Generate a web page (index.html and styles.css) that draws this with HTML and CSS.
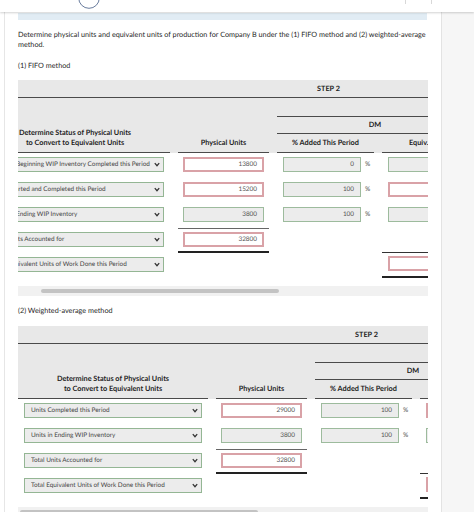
FILE: index.html
```html
<!DOCTYPE html>
<html lang="en">
<head>
<meta charset="utf-8">
<title>Physical and equivalent units</title>
<link rel="stylesheet" href="styles.css">
</head>
<body>
<header class="topbar">
  <div class="tb-circle"><svg width="22" height="22" viewBox="0 0 22 22"><circle cx="11" cy="11" r="10.3" fill="none" stroke="#6a7d9e" stroke-width="1"/></svg></div>
  <div class="tb-btn"></div>
</header>
<div class="page">
  <div class="gutter"></div>
  <main class="card">
    <div class="notice"></div>
    <p class="intro">Determine physical units and equivalent units of production for Company B under the (1) FIFO method and (2) weighted-average method.</p>
    <p class="label">(1) FIFO method</p>

    <div class="scroller">
      <div class="tbl tbl-scrolled">
        <div class="grid thead">
          <div class="step">STEP 2</div>
          <div class="h-tall hc1">Determine Status of Physical Units<br>to Convert to Equivalent Units</div>
          <div class="h-tall hc2">Physical Units</div>
          <div class="h-group hg1">DM</div>
          <div class="h-group hg2"></div>
          <div class="h-cell hc3">% Added This Period</div>
          <div class="h-cell hc4">Equiv.</div>
          <div class="h-cell hc5"></div>
          <div class="h-cell hc6"></div>
        </div>
        <div class="grid tbody">
          <div class="cell c1"><div class="sel"><span>Units in Beginning WIP Inventory Completed this Period</span><svg class="chev" width="6" height="5" viewBox="0 0 6 5"><path d="M0.8 1.1 L3 3.7 L5.2 1.1" fill="none" stroke="#333" stroke-width="1.3"/></svg></div></div>
          <div class="cell c2"><div class="inp red">13800</div></div>
          <div class="cell c3"><div class="inp gray">0</div><span class="pct">%</span></div>
          <div class="cell c4"><div class="inp gray"></div></div>

          <div class="cell c1"><div class="sel"><span>Units Started and Completed this Period</span><svg class="chev" width="6" height="5" viewBox="0 0 6 5"><path d="M0.8 1.1 L3 3.7 L5.2 1.1" fill="none" stroke="#333" stroke-width="1.3"/></svg></div></div>
          <div class="cell c2"><div class="inp red">15200</div></div>
          <div class="cell c3"><div class="inp gray">100</div><span class="pct">%</span></div>
          <div class="cell c4"><div class="inp red"></div></div>

          <div class="cell c1"><div class="sel"><span>Units in Ending WIP Inventory</span><svg class="chev" width="6" height="5" viewBox="0 0 6 5"><path d="M0.8 1.1 L3 3.7 L5.2 1.1" fill="none" stroke="#333" stroke-width="1.3"/></svg></div></div>
          <div class="cell c2"><div class="inp gray">3800</div></div>
          <div class="cell c3"><div class="inp gray">100</div><span class="pct">%</span></div>
          <div class="cell c4"><div class="inp gray"></div></div>

          <div class="cell c1"><div class="sel"><span>Total Units Accounted for</span><svg class="chev" width="6" height="5" viewBox="0 0 6 5"><path d="M0.8 1.1 L3 3.7 L5.2 1.1" fill="none" stroke="#333" stroke-width="1.3"/></svg></div></div>
          <div class="cell c2 total"><div class="inp red">32800</div></div>
          <div class="cell c4 rule"></div>

          <div class="cell c1"><div class="sel"><span>Total Equivalent Units of Work Done this Period</span><svg class="chev" width="6" height="5" viewBox="0 0 6 5"><path d="M0.8 1.1 L3 3.7 L5.2 1.1" fill="none" stroke="#333" stroke-width="1.3"/></svg></div></div>
          <div class="cell c4 grand"><div class="inp red"></div></div>
        </div>
      </div>
    </div>
    <div class="hscroll"><div class="thumb" style="margin-left:23px"></div></div>

    <p class="label label2">(2) Weighted-average method</p>

    <div class="scroller">
      <div class="tbl">
        <div class="grid thead">
          <div class="step">STEP 2</div>
          <div class="h-tall hc1">Determine Status of Physical Units<br>to Convert to Equivalent Units</div>
          <div class="h-tall hc2">Physical Units</div>
          <div class="h-group hg1">DM</div>
          <div class="h-group hg2"></div>
          <div class="h-cell hc3">% Added This Period</div>
          <div class="h-cell hc4"></div>
          <div class="h-cell hc5"></div>
          <div class="h-cell hc6"></div>
        </div>
        <div class="grid tbody">
          <div class="cell c1"><div class="sel"><span>Units Completed this Period</span><svg class="chev" width="6" height="5" viewBox="0 0 6 5"><path d="M0.8 1.1 L3 3.7 L5.2 1.1" fill="none" stroke="#333" stroke-width="1.3"/></svg></div></div>
          <div class="cell c2"><div class="inp red">29000</div></div>
          <div class="cell c3"><div class="inp gray">100</div><span class="pct">%</span></div>
          <div class="cell c4"><div class="inp red"></div></div>

          <div class="cell c1"><div class="sel"><span>Units in Ending WIP Inventory</span><svg class="chev" width="6" height="5" viewBox="0 0 6 5"><path d="M0.8 1.1 L3 3.7 L5.2 1.1" fill="none" stroke="#333" stroke-width="1.3"/></svg></div></div>
          <div class="cell c2"><div class="inp gray">3800</div></div>
          <div class="cell c3"><div class="inp gray">100</div><span class="pct">%</span></div>
          <div class="cell c4"><div class="inp gray"></div></div>

          <div class="cell c1"><div class="sel"><span>Total Units Accounted for</span><svg class="chev" width="6" height="5" viewBox="0 0 6 5"><path d="M0.8 1.1 L3 3.7 L5.2 1.1" fill="none" stroke="#333" stroke-width="1.3"/></svg></div></div>
          <div class="cell c2 total"><div class="inp red">32800</div></div>
          <div class="cell c4 rule"></div>

          <div class="cell c1"><div class="sel"><span>Total Equivalent Units of Work Done this Period</span><svg class="chev" width="6" height="5" viewBox="0 0 6 5"><path d="M0.8 1.1 L3 3.7 L5.2 1.1" fill="none" stroke="#333" stroke-width="1.3"/></svg></div></div>
          <div class="cell c4 grand"><div class="inp red"></div></div>
        </div>
      </div>
    </div>
    <div class="hscroll"><div class="thumb" style="margin-left:2px"></div></div>
  </main>
  <div class="side"></div>
</div>
</body>
</html>
```

FILE: styles.css
```css
* { box-sizing: border-box; margin: 0; padding: 0; }
html, body { height: 100%; }
body {
  font-family: Lato, "Noto Sans", "Liberation Sans", sans-serif;
  color: #222;
  background: #fff;
  overflow: hidden;
  text-rendering: geometricPrecision;
}

.topbar {
  height: 12px;
  display: flex;
  align-items: flex-start;
  background: #fff;
  box-shadow: 0 1px 2px rgba(0, 0, 0, 0.18);
  overflow: hidden;
  position: relative;
  z-index: 1;
}
.tb-circle { margin-left: 78px; margin-top: -13px; width: 22px; height: 22px; }
.tb-btn {
  margin-left: 305px;
  width: 27px;
  height: 4px;
  border-left: 1px solid #d8d8d8;
  border-right: 1px solid #d8d8d8;
}

.page { display: flex; height: 500px; }
.gutter { width: 4px; background: #fff; }
.card {
  width: 438px;
  flex: none;
  background: #fff;
  border-left: 1px solid #e6e6e6;
  border-right: 1px solid #e3e3e3;
  padding: 1px 14px 0 13px;
}
.side { flex: 1; background: #f6f6f6; }

.notice { height: 7px; background: #e1ecf4; }
.intro { margin-top: 10px; font-size: 7.25px; line-height: 10px; color: #1f1f1f; }
.label { margin-top: 11px; font-size: 7.25px; line-height: 10px; color: #1f1f1f; }
.label2 { margin-top: 10px; }

.scroller { margin-top: 9px; width: 410px; overflow: hidden; }
.label2 + .scroller { margin-top: 10px; }
.tbl { width: 697px; }
.tbl-scrolled { margin-left: -38px; }

.grid {
  display: grid;
  grid-template-columns: 190px 91px 97px 91px 97px 91px;
  column-gap: 8px;
}

.thead {
  background: #e8e8e8;
  font-weight: 700;
  font-size: 7.3px;
  color: #1e1e1e;
  text-align: center;
  white-space: nowrap;
}
.step {
  grid-column: 1 / -1;
  grid-row: 1;
  height: 18px;
  line-height: 17px;
  border-bottom: 1px solid #4a4a4a;
}
.h-tall {
  grid-row: 2 / span 2;
  align-self: end;
  line-height: 10px;
  padding-bottom: 4px;
  border-bottom: 1px solid #4a4a4a;
}
.h-group {
  grid-row: 2;
  margin-top: 18px;
  height: 18px;
  line-height: 16px;
  border-top: 1px solid #4a4a4a;
  border-bottom: 1px solid #4a4a4a;
}
.h-cell {
  grid-row: 3;
  height: 19px;
  line-height: 10px;
  padding-top: 4px;
  border-bottom: 1px solid #4a4a4a;
}
.hc1 { grid-column: 1; }
.hc2 { grid-column: 2; }
.hg1 { grid-column: 3 / span 2; }
.hg2 { grid-column: 5 / span 2; }
.hc3 { grid-column: 3; }
.hc4 { grid-column: 4; text-align: left; padding-left: 27px; }
.hc5 { grid-column: 5; }
.hc6 { grid-column: 6; }

.tbody { grid-auto-rows: 25px; }
.cell { display: flex; align-items: center; padding-bottom: 2px; }
.c1 { grid-column: 1; }
.c2 { grid-column: 2; }
.c3 { grid-column: 3; }
.c4 { grid-column: 4; }
.total { border-top: 1px solid #666; border-bottom: 2px solid #222; }
.rule { border-bottom: 1px solid #333; }
.grand { border-bottom: 2px solid #222; }

.sel {
  margin-left: 6px;
  width: 178px;
  height: 15px;
  background: #ececec;
  border: 1px solid #94b694;
  display: flex;
  align-items: center;
  padding: 0 3px 0 6px;
  font-size: 6.4px;
  color: #444;
}
.sel span { flex: 1; white-space: nowrap; overflow: hidden; }
.chev { flex: none; }

.inp {
  height: 15px;
  display: flex;
  align-items: center;
  justify-content: flex-end;
  padding-right: 5px;
  font-size: 6.4px;
  color: #555;
}
.inp.red { background: #fff; border: 2px solid #d9a2a7; }
.inp.gray { background: #ececec; border: 1px solid #9dbb9d; padding-right: 6px; }
.c2 .inp { margin-left: 5px; width: 81px; }
.c3 .inp { margin-left: 6px; width: 78px; }
.c4 .inp { margin-left: 6px; width: 80px; }
.pct { margin-left: 4px; font-size: 6.5px; color: #444; }

.hscroll {
  margin-top: 8px;
  width: 410px;
  height: 10px;
  background: #f1f1f1;
  padding-top: 3px;
}
.thumb { width: 238px; height: 4px; border-radius: 2px; background: #c3c3c3; }
```
